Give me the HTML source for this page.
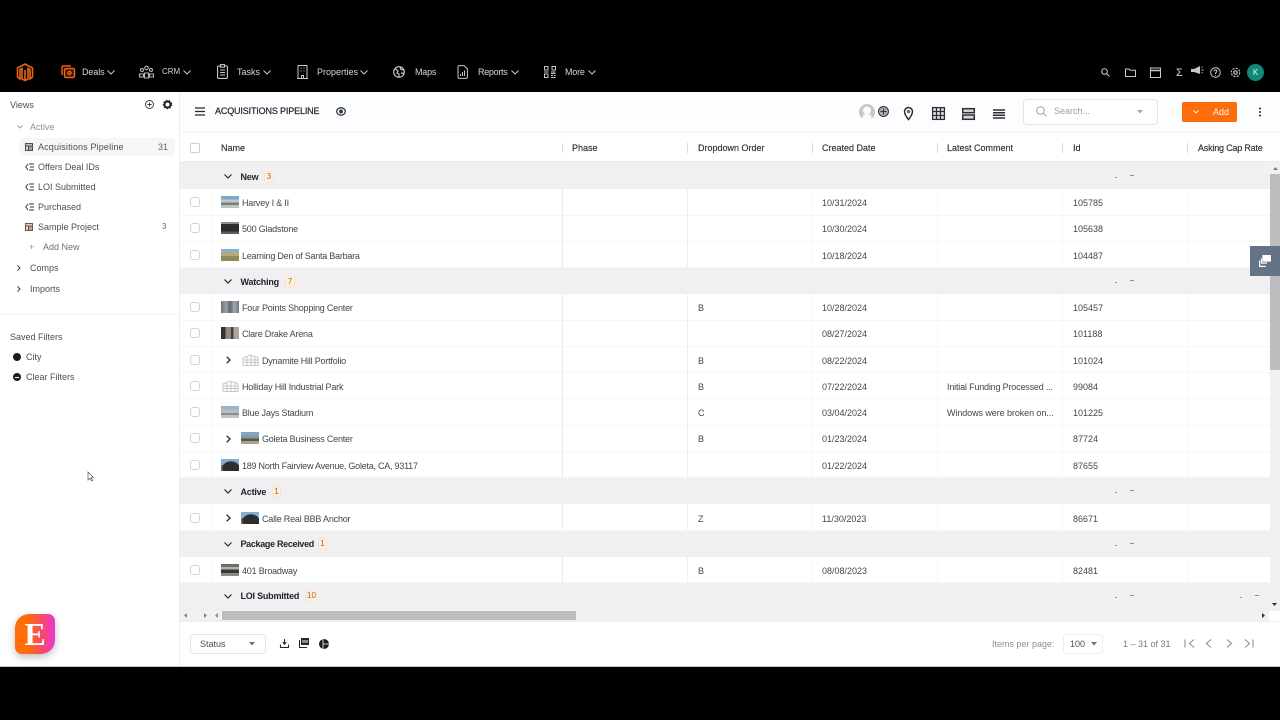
<!DOCTYPE html>
<html><head><meta charset="utf-8"><style>
*{box-sizing:border-box}
html,body{margin:0;padding:0;width:1280px;height:720px;overflow:hidden;background:#000;font-family:"Liberation Sans",sans-serif;font-size:9px;color:#33383f}
.a{position:absolute;white-space:nowrap}
.n{color:#d5d8dc;line-height:12px}
.s{color:#4a4f56;line-height:12px}
.g{position:absolute;left:180px;width:1090px;height:26.25px;background:#f0f0f3}
.gt{position:absolute;left:240.5px;font-weight:bold;color:#1e2126;line-height:12px;letter-spacing:-.22px;white-space:nowrap}
.b{position:absolute;height:12px;background:#fdf0e2;border:1px solid #fbe3cb;border-radius:2px;color:#a06a20;font-size:8px;line-height:10px;text-align:center}
.r{position:absolute;left:180px;width:1090px;height:26.25px;background:#fff;border-bottom:1px solid #f5f6f7}
.c{position:absolute;left:189.5px;width:10px;height:10px;border:1px solid #cfd3da;border-radius:3px;background:#fff}
.t{position:absolute;color:#41464d;line-height:12px;white-space:nowrap}
.m{letter-spacing:-.2px}
.v{position:absolute;width:1px;background:#f6f7f8}
.h{position:absolute;top:143px;width:1px;height:10px;background:#d8dade}
.th{position:absolute;top:142px;color:#2b2f36;line-height:12px;-webkit-text-stroke:.15px #2b2f36;white-space:nowrap}
.img{position:absolute;width:18px;height:12px}
svg{position:absolute;overflow:visible}
.d1{position:absolute;width:2px;height:1px;background:#9a9ca0}
.d2{position:absolute;width:4px;height:1px;background:#8e9094}
</style></head><body>
<div class="a" style="left:0;top:92px;width:1280px;height:574px;background:#fff"></div>
<div class="a" style="left:0;top:666px;width:1280px;height:1px;background:#c9cbc0"></div>

<!-- top nav -->
<svg style="left:16px;top:63px" width="18" height="18" viewBox="0 0 18 18" fill="none" stroke="#e8640f" stroke-width="1.600"><path d="M1.500 5L9 1l7.500 4v9l-2.500 2V6.500L12 5.500V16l-3 1.500L6 16V5.500L4 6.500V16l-2.500-2z"/><path d="M9 7v10"/></svg>
<svg style="left:61px;top:65px" width="15" height="14" viewBox="0 0 15 14" fill="none" stroke="#e8640f" stroke-width="1.500"><path d="M1 10V2.500Q1 1 2.500 1H10"/><rect x="3.500" y="3.500" width="10" height="9" rx="1.500" fill="#3a1a05"/><circle cx="8.500" cy="8" r="1.500"/></svg>
<div class="a n" style="left:82px;top:66px;letter-spacing:-.1px">Deals</div>
<svg style="left:107px;top:70px" width="8" height="5" fill="none" stroke="#c5c8cc" stroke-width="1"><path d="M.5.500L4 4 7.500.500"/></svg>
<svg style="left:139px;top:65px" width="15" height="14" viewBox="0 0 15 14" fill="none" stroke="#b6bac0" stroke-width="1.100"><circle cx="7.500" cy="3" r="1.800"/><circle cx="3" cy="5" r="1.500"/><circle cx="12" cy="5" r="1.500"/><path d="M.5 12V9h4v3zM5.500 13V8h4v5zM10.500 12V9h4v3z"/></svg>
<div class="a n" style="left:162px;top:66px;font-size:8px">CRM</div>
<svg style="left:183px;top:70px" width="8" height="5" fill="none" stroke="#c5c8cc" stroke-width="1"><path d="M.5.500L4 4 7.500.500"/></svg>
<svg style="left:217px;top:64px" width="11" height="15" viewBox="0 0 11 15" fill="none" stroke="#c5c8cc" stroke-width="1.100"><rect x=".6" y="2" width="9.800" height="12.400" rx="1"/><rect x="3.500" y=".6" width="4" height="2.500" fill="#000"/><path d="M3 6h5M3 8.500h5M3 11h5"/></svg>
<div class="a n" style="left:237px;top:66px">Tasks</div>
<svg style="left:263px;top:70px" width="8" height="5" fill="none" stroke="#c5c8cc" stroke-width="1"><path d="M.5.500L4 4 7.500.500"/></svg>
<svg style="left:297px;top:65px" width="11" height="14" viewBox="0 0 11 14" fill="none" stroke="#c5c8cc" stroke-width="1"><path d="M1 13.500V.5h9v13M0 13.500h11M4.500 13.500V10.500h2v3"/><path d="M3.500 3h1M6.500 3h1M3.500 6h1M6.500 6h1"/></svg>
<div class="a n" style="left:317px;top:66px">Properties</div>
<svg style="left:360px;top:70px" width="8" height="5" fill="none" stroke="#c5c8cc" stroke-width="1"><path d="M.5.500L4 4 7.500.500"/></svg>
<svg style="left:393px;top:66px" width="12" height="12" viewBox="0 0 12 12" fill="none" stroke="#c5c8cc" stroke-width="1.200"><circle cx="6" cy="6" r="5.300"/><path d="M2 2.500L5 5 4 7l2 1v3M7 1l1 2.500L10.500 4M8 7l3 .5"/></svg>
<div class="a n" style="left:415px;top:66px;letter-spacing:-.2px">Maps</div>
<svg style="left:457px;top:65px" width="11" height="14" viewBox="0 0 11 14" fill="none" stroke="#c5c8cc" stroke-width="1"><path d="M1 2Q1 .6 2.500.6H7L10.400 4v8Q10.400 13.400 9 13.400H2.500Q1 13.400 1 12z"/><path d="M3.500 11V9M5.500 11V7M7.500 11V5.500"/></svg>
<div class="a n" style="left:478px;top:66px;letter-spacing:-.3px">Reports</div>
<svg style="left:511px;top:70px" width="8" height="5" fill="none" stroke="#c5c8cc" stroke-width="1"><path d="M.5.500L4 4 7.500.500"/></svg>
<svg style="left:544px;top:66px" width="12" height="12" viewBox="0 0 12 12" fill="none" stroke="#c5c8cc" stroke-width="1"><rect x=".5" y=".5" width="3.500" height="3.500"/><rect x="8" y=".5" width="3.500" height="3.500"/><rect x=".5" y="8" width="3.500" height="3.500"/><path d="M7 7.500h4.500M7 9.500h2M10 9.500h1.500M7 11.500h4.500M0 6h4.500M7 6h4.500"/></svg>
<div class="a n" style="left:565px;top:66px;letter-spacing:-.2px">More</div>
<svg style="left:588px;top:70px" width="8" height="5" fill="none" stroke="#c5c8cc" stroke-width="1"><path d="M.5.500L4 4 7.500.500"/></svg>

<svg style="left:1101px;top:68px" width="9" height="9" fill="none" stroke="#c5c8cc" stroke-width="1"><circle cx="3.500" cy="3.500" r="2.800"/><path d="M5.500 5.500L8.500 8.500"/></svg>
<svg style="left:1125px;top:68px" width="11" height="9" viewBox="0 0 11 9" fill="none" stroke="#c5c8cc" stroke-width="1"><path d="M.5 1h3.500l1 1.200h5.500V8.500H.5z"/></svg>
<svg style="left:1150px;top:67px" width="11" height="11" viewBox="0 0 11 11" fill="none" stroke="#c5c8cc" stroke-width="1"><rect x=".5" y="1" width="10" height="9.500"/><path d="M.5 3.500h10" stroke-width="1.500"/></svg>
<div class="a" style="left:1176px;top:67px;color:#d0d3d6;font-size:11px;line-height:12px">Σ</div>
<svg style="left:1191px;top:66px" width="13" height="10" viewBox="0 0 13 10"><path d="M0 3h3l6-3v8L3 6H0z" fill="#c5c8cc"/><path d="M10.500 1.500l1-.5M10.500 4h2M10.500 6.500l1 .5" stroke="#c5c8cc"/></svg>
<svg style="left:1210px;top:67px" width="11" height="11" viewBox="0 0 11 11" fill="none" stroke="#c5c8cc" stroke-width="1"><circle cx="5.500" cy="5.500" r="4.800"/><path d="M4 4.300Q4 3 5.500 3T7 4.300Q7 5 5.500 6V7M5.500 8v.8"/></svg>
<svg style="left:1230px;top:67px" width="11" height="11" viewBox="0 0 11 11" fill="none" stroke="#c5c8cc" stroke-width="1.200"><circle cx="5.500" cy="5.500" r="1.700"/><circle cx="5.500" cy="5.500" r="4.200" stroke-dasharray="2 1.300"/></svg>
<div class="a" style="left:1247px;top:64px;width:17px;height:17px;border-radius:50%;background:#0f8a78;color:#e8f5f2;text-align:center;font-size:8px;line-height:17px">K</div>

<!-- sidebar -->
<div class="a" style="left:179px;top:92px;width:1px;height:574px;background:#eceef0"></div>
<div class="a s" style="left:10px;top:99px">Views</div>
<svg style="left:145px;top:100px" width="9" height="9" fill="none" stroke="#33383f" stroke-width=".9"><circle cx="4.500" cy="4.500" r="4"/><path d="M2.500 4.500h4M4.500 2.500v4"/></svg>
<svg style="left:163px;top:100px" width="9" height="9"><circle cx="4.500" cy="4.500" r="3" fill="none" stroke="#1f2226" stroke-width="2"/><circle cx="4.500" cy="4.500" r="4.200" fill="none" stroke="#1f2226" stroke-width="1.200" stroke-dasharray="1.500 1.500"/></svg>
<svg style="left:17px;top:125px" width="6" height="4" fill="none" stroke="#9a9da2" stroke-width=".9"><path d="M.5.500L3 3 5.500.5"/></svg>
<div class="a" style="left:30px;top:121px;line-height:12px;color:#8d9096">Active</div>
<div class="a" style="left:19px;top:138px;width:156px;height:18px;background:#f6f6f7;border-radius:4px"></div>
<svg style="left:25px;top:143px" width="8" height="8"><rect width="8" height="8" fill="#5b4a42"/><rect x="1" y="1" width="6" height="1.500" fill="#c9c2be"/><rect x="1" y="3.500" width="2" height="3.500" fill="#d8d2ce"/><rect x="4" y="3.500" width="3" height="3.500" fill="#a8a09c"/></svg>
<div class="a s" style="left:38px;top:141px;letter-spacing:.15px">Acquisitions Pipeline</div>
<div class="a" style="left:158px;top:141px;color:#62666c;line-height:12px">31</div>
<svg style="left:25px;top:163px" width="9" height="8" fill="none" stroke="#33383f" stroke-width="1"><path d="M3 1L.8 4 3 7M4 1h5M5 4h4M4 7h5"/></svg>
<div class="a s" style="left:38px;top:161px">Offers Deal IDs</div>
<svg style="left:25px;top:183px" width="9" height="8" fill="none" stroke="#33383f" stroke-width="1"><path d="M3 1L.8 4 3 7M4 1h5M5 4h4M4 7h5"/></svg>
<div class="a s" style="left:38px;top:181px">LOI Submitted</div>
<svg style="left:25px;top:203px" width="9" height="8" fill="none" stroke="#33383f" stroke-width="1"><path d="M3 1L.8 4 3 7M4 1h5M5 4h4M4 7h5"/></svg>
<div class="a s" style="left:38px;top:201px">Purchased</div>
<svg style="left:25px;top:223px" width="8" height="8"><rect width="8" height="8" fill="#6e5549"/><rect x="1" y="1" width="6" height="1.500" fill="#dcd4cf"/><rect x="1" y="3.500" width="2" height="3.500" fill="#e0d8d3"/><rect x="4" y="3.500" width="3" height="3.500" fill="#b5aaa3"/></svg>
<div class="a s" style="left:38px;top:221px">Sample Project</div>
<div class="a" style="left:162px;top:221px;color:#62666c;line-height:12px;font-size:8px">3</div>
<div class="a" style="left:29px;top:241px;color:#8d9096;line-height:12px">+</div>
<div class="a" style="left:43px;top:241px;color:#6d7177;line-height:12px">Add New</div>
<svg style="left:17px;top:265px" width="4" height="6" fill="none" stroke="#33383f" stroke-width="1"><path d="M.5.500L3 3 .5 5.500"/></svg>
<div class="a s" style="left:30px;top:262px">Comps</div>
<svg style="left:17px;top:286px" width="4" height="6" fill="none" stroke="#33383f" stroke-width="1"><path d="M.5.500L3 3 .5 5.500"/></svg>
<div class="a s" style="left:30px;top:283px">Imports</div>
<div class="a" style="left:0;top:314px;width:179px;height:1px;background:#f3f4f5"></div>
<div class="a s" style="left:10px;top:331px">Saved Filters</div>
<div class="a" style="left:13px;top:353px;width:8px;height:8px;border-radius:50%;background:#1b1d20"></div>
<div class="a s" style="left:26px;top:351px">City</div>
<div class="a" style="left:13px;top:373px;width:8px;height:8px;border-radius:50%;background:#1b1d20"></div>
<div class="a" style="left:15px;top:376.500px;width:4px;height:1px;background:#fff"></div>
<div class="a s" style="left:26px;top:371px">Clear Filters</div>
<svg style="left:87px;top:471px" width="8" height="11" fill="#fff" stroke="#555" stroke-width=".7"><path d="M1 1v8l2-1.800L4.500 10l1-.5L4.300 6.800 6.500 6.500z"/></svg>
<div class="a" style="left:15px;top:614px;width:40px;height:40px;border-radius:14px 7px 14px 7px;background:linear-gradient(90deg,#ff6c0a 0%,#ff6c0a 33%,#f7486a 68%,#ee36d0 100%);box-shadow:0 3px 8px rgba(0,0,0,.25);color:#fff;font-family:'Liberation Serif',serif;font-weight:bold;font-size:32px;line-height:40px;text-align:center">E</div>

<!-- toolbar -->
<div class="a" style="left:180px;top:93px;width:1100px;height:40px;background:#fcfdfe;border-bottom:1px solid #f1f3f5"></div>
<svg style="left:195px;top:107px" width="10" height="9" fill="none" stroke="#24272b" stroke-width="1.200"><path d="M0 1h10M0 4.500h10M0 8h10"/></svg>
<div class="a" style="left:215px;top:105px;color:#22252a;line-height:12px;letter-spacing:-.15px;-webkit-text-stroke:.2px #22252a">ACQUISITIONS PIPELINE</div>
<svg style="left:336px;top:107px" width="10" height="9" fill="none" stroke="#33383f" stroke-width="1.300"><ellipse cx="5" cy="4.500" rx="4.300" ry="3.700"/><circle cx="5" cy="4.500" r="1.300" fill="#33383f"/></svg>
<svg style="left:859px;top:104px" width="16" height="16" viewBox="0 0 16 16"><circle cx="8" cy="8" r="8" fill="#c6c7c8"/><circle cx="8" cy="6.500" r="4" fill="#fbfcfc"/><path d="M3.500 16v-3Q4 10 8 10t4.500 3v3z" fill="#fbfcfc"/></svg>
<svg style="left:878px;top:106px" width="11" height="11" fill="none"><circle cx="5.500" cy="5.500" r="5" fill="#a8aaac" stroke="#33383f"/><path d="M2.500 5.500h6M5.500 2.500v6" stroke="#33383f"/></svg>
<svg style="left:904px;top:107px" width="9" height="13" viewBox="0 0 9 13"><path d="M4.500.5A4 4 0 0 0 .5 4.500C.5 7.500 4.500 12.500 4.500 12.500S8.500 7.500 8.500 4.500A4 4 0 0 0 4.500.5z" fill="#fff" stroke="#2b2e33" stroke-width="1.500"/><circle cx="4.500" cy="4.500" r="1.800" fill="#6e7175"/></svg>
<svg style="left:932px;top:107px" width="13" height="13" fill="#fff" stroke="#2b2e33" stroke-width="1.300"><rect x=".6" y=".6" width="11.800" height="11.800" fill="#e5e5e5"/><path d="M4.500.6v11.800M8.500.6v11.800M.6 4.500h11.800M.6 8.500h11.800"/></svg>
<svg style="left:962px;top:108px" width="13" height="12" fill="#d5d6d6" stroke="#2b2e33" stroke-width="1.500"><rect x=".7" y=".7" width="11.600" height="4"/><rect x=".7" y="7" width="11.600" height="4.300"/></svg>
<svg style="left:993px;top:109px" width="12" height="10" fill="none" stroke="#2b2e33" stroke-width="1.500"><path d="M0 1h12M0 3.700h12M0 6.300h12M0 9h12"/></svg>
<div class="a" style="left:1023px;top:99px;width:135px;height:26px;background:#fff;border:1px solid #dfe2ea;border-radius:4px"></div>
<svg style="left:1036px;top:106px" width="11" height="11" fill="none" stroke="#9aa0a8" stroke-width="1"><circle cx="4.500" cy="4.500" r="3.800"/><path d="M7.300 7.300l3.200 3.200"/></svg>
<div class="a" style="left:1054px;top:105px;color:#9a9ea5;line-height:12px">Search...</div>
<svg style="left:1137px;top:110px" width="6" height="4"><path d="M0 0h6L3 3.500z" fill="#a5a8ad"/></svg>
<div class="a" style="left:1182px;top:102px;width:55px;height:20px;background:#ff6c0a;border-radius:2px"></div>
<svg style="left:1193px;top:110px" width="6" height="4" fill="none" stroke="#fff" stroke-width="1"><path d="M.5.500L3 3 5.500.5"/></svg>
<div class="a" style="left:1213px;top:106px;color:#fff;line-height:12px">Add</div>
<svg style="left:1258px;top:107px" width="4" height="10" fill="#24272b"><circle cx="2" cy="1.500" r="1"/><circle cx="2" cy="5" r="1"/><circle cx="2" cy="8.500" r="1"/></svg>

<!-- table header -->
<div class="a" style="left:180px;top:133px;width:1100px;height:30px;background:#fff;border-bottom:2px solid #eceef0"></div>
<div class="a" style="left:190px;top:143px;width:10px;height:10px;border:1px solid #c9cdd4;border-radius:2px"></div>
<div class="th" style="left:221px">Name</div>
<div class="th" style="left:572px">Phase</div>
<div class="th" style="left:698px">Dropdown Order</div>
<div class="th" style="left:822px">Created Date</div>
<div class="th" style="left:947px">Latest Comment</div>
<div class="th" style="left:1073px">Id</div>
<div class="th" style="left:1198px;letter-spacing:-.2px">Asking Cap Rate</div>
<div class="h" style="left:562px"></div><div class="h" style="left:687px"></div><div class="h" style="left:812px"></div><div class="h" style="left:937px"></div><div class="h" style="left:1062px"></div><div class="h" style="left:1187px"></div>

<!-- rows bg -->
<div class="g" style="top:163px"></div>
<div class="r" style="top:189.250px"></div><div class="r" style="top:215.500px"></div><div class="r" style="top:241.750px"></div>
<div class="g" style="top:268px"></div>
<div class="r" style="top:294.250px"></div><div class="r" style="top:320.500px"></div><div class="r" style="top:346.750px"></div><div class="r" style="top:373px"></div><div class="r" style="top:399.250px"></div><div class="r" style="top:425.500px"></div><div class="r" style="top:451.750px"></div>
<div class="g" style="top:478px"></div>
<div class="r" style="top:504.250px"></div>
<div class="g" style="top:530.500px"></div>
<div class="r" style="top:556.750px"></div>
<div class="g" style="top:583px;height:28px"></div>

<!-- vertical lines -->
<div class="v" style="left:212px;top:189px;height:79px"></div><div class="v" style="left:212px;top:294px;height:184px"></div><div class="v" style="left:212px;top:504px;height:26px"></div><div class="v" style="left:212px;top:557px;height:26px"></div>
<div class="v" style="left:562px;top:189px;height:79px;background:#e9eaec"></div><div class="v" style="left:562px;top:294px;height:184px;background:#e9eaec"></div><div class="v" style="left:562px;top:504px;height:26px;background:#e9eaec"></div><div class="v" style="left:562px;top:557px;height:26px;background:#e9eaec"></div>
<div class="v" style="left:687px;top:189px;height:79px;background:#eff0f2"></div><div class="v" style="left:687px;top:294px;height:184px;background:#eff0f2"></div><div class="v" style="left:687px;top:504px;height:26px;background:#eff0f2"></div><div class="v" style="left:687px;top:557px;height:26px;background:#eff0f2"></div>
<div class="v" style="left:812px;top:189px;height:79px"></div><div class="v" style="left:812px;top:294px;height:184px"></div><div class="v" style="left:812px;top:504px;height:26px"></div><div class="v" style="left:812px;top:557px;height:26px"></div>
<div class="v" style="left:937px;top:189px;height:79px"></div><div class="v" style="left:937px;top:294px;height:184px"></div><div class="v" style="left:937px;top:504px;height:26px"></div><div class="v" style="left:937px;top:557px;height:26px"></div>
<div class="v" style="left:1062px;top:189px;height:79px"></div><div class="v" style="left:1062px;top:294px;height:184px"></div><div class="v" style="left:1062px;top:504px;height:26px"></div><div class="v" style="left:1062px;top:557px;height:26px"></div>
<div class="v" style="left:1187px;top:189px;height:79px"></div><div class="v" style="left:1187px;top:294px;height:184px"></div><div class="v" style="left:1187px;top:504px;height:26px"></div><div class="v" style="left:1187px;top:557px;height:26px"></div>

<!-- groups -->
<svg style="left:224px;top:174px" width="8" height="5" fill="none" stroke="#24272b" stroke-width="1.200"><path d="M.5.500L4 4 7.500.5"/></svg>
<div class="gt" style="top:170.500px">New</div><div class="b" style="left:264px;top:170.500px;width:10px">3</div>
<svg style="left:224px;top:279px" width="8" height="5" fill="none" stroke="#24272b" stroke-width="1.200"><path d="M.5.500L4 4 7.500.5"/></svg>
<div class="gt" style="top:275.500px">Watching</div><div class="b" style="left:285px;top:275.500px;width:10px">7</div>
<svg style="left:224px;top:489px" width="8" height="5" fill="none" stroke="#24272b" stroke-width="1.200"><path d="M.5.500L4 4 7.500.5"/></svg>
<div class="gt" style="top:485.500px">Active</div><div class="b" style="left:272px;top:485.500px;width:9px">1</div>
<svg style="left:224px;top:541.500px" width="8" height="5" fill="none" stroke="#24272b" stroke-width="1.200"><path d="M.5.500L4 4 7.500.5"/></svg>
<div class="gt" style="top:538px;letter-spacing:-.32px">Package Received</div><div class="b" style="left:318px;top:538px;width:9px">1</div>
<svg style="left:224px;top:594px" width="8" height="5" fill="none" stroke="#24272b" stroke-width="1.200"><path d="M.5.500L4 4 7.500.5"/></svg>
<div class="gt" style="top:590px">LOI Submitted</div><div class="b" style="left:306px;top:590px;width:11px">10</div>

<div class="d1" style="left:1115px;top:177px"></div><div class="d2" style="left:1130px;top:175px"></div>
<div class="d1" style="left:1115px;top:282px"></div><div class="d2" style="left:1130px;top:280px"></div>
<div class="d1" style="left:1115px;top:492px"></div><div class="d2" style="left:1130px;top:490px"></div>
<div class="d1" style="left:1115px;top:545px"></div><div class="d2" style="left:1130px;top:543px"></div>
<div class="d1" style="left:1115px;top:597px"></div><div class="d2" style="left:1130px;top:595px"></div>
<div class="d1" style="left:1240px;top:597px"></div><div class="d2" style="left:1255px;top:595px"></div>

<!-- checkboxes -->
<div class="c" style="top:197px"></div><div class="c" style="top:223px"></div><div class="c" style="top:250px"></div>
<div class="c" style="top:302px"></div><div class="c" style="top:328px"></div><div class="c" style="top:355px"></div><div class="c" style="top:381px"></div><div class="c" style="top:407px"></div><div class="c" style="top:433px"></div><div class="c" style="top:460px"></div>
<div class="c" style="top:513px"></div><div class="c" style="top:565px"></div>

<!-- thumbnails -->
<div class="img" style="left:221px;top:196px;background:linear-gradient(180deg,#7aa6cf 0 30%,#c4c8c8 30% 55%,#7b7f7e 55% 75%,#c0c2be 75%)"></div>
<div class="img" style="left:221px;top:222px;background:linear-gradient(180deg,#8b8d8e 0 15%,#2f2d2c 15% 80%,#5e5c58 80%)"></div>
<div class="img" style="left:221px;top:249px;background:linear-gradient(180deg,#84afd6 0 25%,#b8a878 25% 60%,#8f8a5a 60%)"></div>
<div class="img" style="left:221px;top:301px;background:linear-gradient(90deg,#6d7480,#9aa0aa 30%,#5f6672 50%,#a3a8b0 75%,#70767f)"></div>
<div class="img" style="left:221px;top:327px;background:linear-gradient(90deg,#3a2f28 0 25%,#8f8a84 25% 55%,#4b4038 55% 70%,#aaa59e 70%)"></div>
<svg style="left:242px;top:354px" width="17" height="12" fill="none" stroke="#c6c8c9" stroke-width="1"><path d="M1 11.500V4l7-3 8 2.500v8zM1 6h15M1 8.500h15M5 3v8.500M9 2v9.500M13 3v8.500"/></svg>
<svg style="left:222px;top:380px" width="17" height="12" fill="none" stroke="#c6c8c9" stroke-width="1"><path d="M1 11.500V4l7-3 8 2.500v8zM1 6h15M1 8.500h15M5 3v8.500M9 2v9.500M13 3v8.500"/></svg>
<div class="img" style="left:221px;top:406px;background:linear-gradient(180deg,#9ab3c9 0 30%,#b6bcc0 30% 60%,#8b8f8d 60% 75%,#c3c4bf 75%)"></div>
<div class="img" style="left:241px;top:432px;background:linear-gradient(180deg,#7da7cf 0 30%,#8f9a8a 30% 55%,#57584f 55% 75%,#a5a193 75%)"></div>
<div class="img" style="left:221px;top:459px;background:radial-gradient(ellipse 9px 7px at 55% 75%,#2e2e30 0 90%,transparent 100%),linear-gradient(180deg,#85aed3 0 50%,#77746c 50%)"></div>
<div class="img" style="left:241px;top:512px;background:radial-gradient(ellipse 9px 7px at 55% 75%,#2e2e30 0 90%,transparent 100%),linear-gradient(180deg,#85aed3 0 50%,#77746c 50%)"></div>
<div class="img" style="left:221px;top:564px;background:linear-gradient(180deg,#6f6d6a 0 25%,#b4b1aa 25% 45%,#38383a 45% 75%,#8c8a84 75%)"></div>

<!-- expanders -->
<svg style="left:226px;top:356px" width="5" height="8" fill="none" stroke="#24272b" stroke-width="1.300"><path d="M.7.700L4 4 .7 7.300"/></svg>
<svg style="left:226px;top:435px" width="5" height="8" fill="none" stroke="#24272b" stroke-width="1.300"><path d="M.7.700L4 4 .7 7.300"/></svg>
<svg style="left:226px;top:514px" width="5" height="8" fill="none" stroke="#24272b" stroke-width="1.300"><path d="M.7.700L4 4 .7 7.300"/></svg>

<!-- names -->
<div class="t m" style="left:242px;top:197px">Harvey I &amp; II</div>
<div class="t m" style="left:242px;top:223px">500 Gladstone</div>
<div class="t m" style="left:242px;top:250px;letter-spacing:-.24px">Learning Den of Santa Barbara</div>
<div class="t m" style="left:242px;top:302px">Four Points Shopping Center</div>
<div class="t m" style="left:242px;top:328px">Clare Drake Arena</div>
<div class="t m" style="left:262px;top:355px">Dynamite Hill Portfolio</div>
<div class="t m" style="left:242px;top:381px">Holliday Hill Industrial Park</div>
<div class="t m" style="left:242px;top:407px">Blue Jays Stadium</div>
<div class="t m" style="left:262px;top:433px">Goleta Business Center</div>
<div class="t m" style="left:242px;top:460px;letter-spacing:-.24px">189 North Fairview Avenue, Goleta, CA, 93117</div>
<div class="t m" style="left:262px;top:513px">Calle Real BBB Anchor</div>
<div class="t m" style="left:242px;top:565px">401 Broadway</div>

<!-- dropdown -->
<div class="t" style="left:698px;top:302px">B</div><div class="t" style="left:698px;top:355px">B</div><div class="t" style="left:698px;top:381px">B</div><div class="t" style="left:698px;top:407px">C</div><div class="t" style="left:698px;top:433px">B</div><div class="t" style="left:698px;top:513px">Z</div><div class="t" style="left:698px;top:565px">B</div>

<!-- dates -->
<div class="t" style="left:822px;top:197px">10/31/2024</div>
<div class="t" style="left:822px;top:223px">10/30/2024</div>
<div class="t" style="left:822px;top:250px">10/18/2024</div>
<div class="t" style="left:822px;top:302px">10/28/2024</div>
<div class="t" style="left:822px;top:328px">08/27/2024</div>
<div class="t" style="left:822px;top:355px">08/22/2024</div>
<div class="t" style="left:822px;top:381px">07/22/2024</div>
<div class="t" style="left:822px;top:407px">03/04/2024</div>
<div class="t" style="left:822px;top:433px">01/23/2024</div>
<div class="t" style="left:822px;top:460px">01/22/2024</div>
<div class="t" style="left:822px;top:513px">11/30/2023</div>
<div class="t" style="left:822px;top:565px">08/08/2023</div>

<!-- comments -->
<div class="t" style="left:947px;top:381px;letter-spacing:-.18px">Initial Funding Processed ...</div>
<div class="t" style="left:947px;top:407px;letter-spacing:-.08px">Windows were broken on...</div>

<!-- ids -->
<div class="t" style="left:1073px;top:197px">105785</div>
<div class="t" style="left:1073px;top:223px">105638</div>
<div class="t" style="left:1073px;top:250px">104487</div>
<div class="t" style="left:1073px;top:302px">105457</div>
<div class="t" style="left:1073px;top:328px">101188</div>
<div class="t" style="left:1073px;top:355px">101024</div>
<div class="t" style="left:1073px;top:381px">99084</div>
<div class="t" style="left:1073px;top:407px">101225</div>
<div class="t" style="left:1073px;top:433px">87724</div>
<div class="t" style="left:1073px;top:460px">87655</div>
<div class="t" style="left:1073px;top:513px">86671</div>
<div class="t" style="left:1073px;top:565px">82481</div>

<!-- scrollbars -->
<div class="a" style="left:1270px;top:163px;width:10px;height:448px;background:#f1f1f3"></div>
<div class="a" style="left:1270px;top:174px;width:10px;height:196px;background:#bdbdc0"></div>
<svg style="left:1273px;top:167px" width="5" height="3"><path d="M0 3h5L2.500 0z" fill="#7a7a7a"/></svg>
<svg style="left:1272px;top:603px" width="5" height="3"><path d="M0 0h5L2.500 3z" fill="#333"/></svg>
<div class="a" style="left:180px;top:611px;width:1100px;height:10px;background:#f1f1f3"></div>
<div class="a" style="left:222px;top:611px;width:354px;height:9px;background:#bdbdc0"></div>
<svg style="left:184px;top:613px" width="3" height="5"><path d="M3 0v5L0 2.500z" fill="#888"/></svg>
<svg style="left:204px;top:613px" width="3" height="5"><path d="M0 0v5l3-2.500z" fill="#888"/></svg>
<svg style="left:215px;top:613px" width="3" height="5"><path d="M3 0v5L0 2.500z" fill="#888"/></svg>
<svg style="left:1262px;top:613px" width="3" height="5"><path d="M0 0v5l3-2.500z" fill="#333"/></svg>
<div class="a" style="left:1269px;top:611px;width:11px;height:10px;background:#fff"></div>

<!-- floating button -->
<div class="a" style="left:1250px;top:246px;width:30px;height:30px;background:#657387"></div>
<svg style="left:1259px;top:255px" width="12" height="12" fill="none" stroke="#fff" stroke-width="1.200"><rect x="4" y=".6" width="7.400" height="5.400" fill="#fff"/><path d="M2.500 3.500v4.500H8M.6 5.500v5.900h6"/></svg>

<!-- footer -->
<div class="a" style="left:180px;top:621px;width:1100px;height:45px;background:#fff;border-top:1px solid #eceef0"></div>
<div class="a" style="left:190px;top:634px;width:76px;height:20px;border:1px solid #e2e4ea;border-radius:3px;background:#fff"></div>
<div class="a" style="left:200px;top:638px;color:#4a4e55;line-height:12px">Status</div>
<svg style="left:249px;top:642px" width="6" height="4"><path d="M0 0h6L3 3.500z" fill="#6d7177"/></svg>
<svg style="left:280px;top:639px" width="9" height="9" fill="none" stroke="#24272b" stroke-width="1.100"><path d="M4.500 0v5M2.700 3.200l1.800 2 1.800-2M.5 5.500v3h8v-3"/></svg>
<svg style="left:299px;top:638px" width="10" height="10" fill="#24272b"><rect x="2" y="0" width="8" height="7"/><rect x="3" y="2" width="6" height="3" fill="#8a8c90"/><path d="M0 2h1v7h7v1H0z"/></svg>
<svg style="left:319px;top:639px" width="10" height="10"><circle cx="5" cy="5" r="5" fill="#1c1e22"/><path d="M4 0v10M4 5h6" stroke="#fff" stroke-width=".8"/></svg>
<div class="a" style="left:992px;top:638px;color:#8a8f96;line-height:12px">Items per page:</div>
<div class="a" style="left:1063px;top:634px;width:40px;height:20px;border:1px solid #eceef1;border-radius:3px"></div>
<div class="a" style="left:1070px;top:638px;color:#4a4e55;line-height:12px">100</div>
<svg style="left:1091px;top:642px" width="6" height="4"><path d="M0 0h6L3 3.500z" fill="#6d7177"/></svg>
<div class="a" style="left:1123px;top:638px;color:#757a81;line-height:12px">1 – 31 of 31</div>
<svg style="left:1184px;top:639px" width="70" height="10" fill="none" stroke="#8a8f96" stroke-width="1.100"><path d="M1 .5v8M10 .5L5.500 4.500 10 8.500M27 .5L22.500 4.500 27 8.500M43 .5L47.500 4.500 43 8.500M61 .5L65.500 4.500 61 8.500M69 .5v8"/></svg>
</body></html>
